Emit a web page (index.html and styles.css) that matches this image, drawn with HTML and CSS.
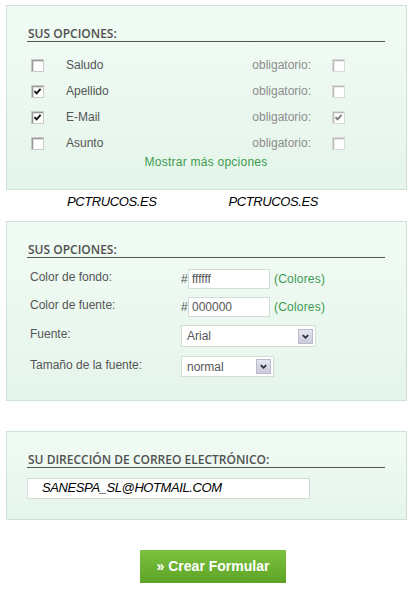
FILE: index.html
```html
<!DOCTYPE html>
<html lang="es">
<head>
<meta charset="utf-8">
<title>Formulario</title>
<link rel="stylesheet" href="styles.css">
</head>
<body>
<div class="page">
  <section class="panel panel-opts">
    <h2 class="heading">SUS OPCIONES:</h2>
    <ul class="opts">
      <li class="opt"><span class="cb"></span><span class="name">Saludo</span><span class="req">obligatorio:</span><span class="cb cb-dis"></span></li>
      <li class="opt"><span class="cb"><svg class="tick" viewBox="0 0 9 9"><path d="M1.5 4.2 L3.6 6.4 L7.6 1.8"/></svg></span><span class="name">Apellido</span><span class="req">obligatorio:</span><span class="cb cb-dis"></span></li>
      <li class="opt"><span class="cb"><svg class="tick" viewBox="0 0 9 9"><path d="M1.5 4.2 L3.6 6.4 L7.6 1.8"/></svg></span><span class="name">E-Mail</span><span class="req">obligatorio:</span><span class="cb cb-dis"><svg class="tick tick-dis" viewBox="0 0 9 9"><path d="M1.5 4.2 L3.6 6.4 L7.6 1.8"/></svg></span></li>
      <li class="opt"><span class="cb"></span><span class="name">Asunto</span><span class="req">obligatorio:</span><span class="cb cb-dis"></span></li>
    </ul>
    <div class="more">Mostrar más opciones</div>
  </section>

  <div class="brand"><span class="brand-a">PCTRUCOS.ES</span><span class="brand-b">PCTRUCOS.ES</span></div>

  <section class="panel panel-style">
    <h2 class="heading">SUS OPCIONES:</h2>
    <div class="form">
      <div class="frow r1">
        <span class="flabel">Color de fondo:</span>
        <span class="fctl"><span class="hash">#</span><span class="tin">ffffff</span><span class="link">(Colores)</span></span>
      </div>
      <div class="frow r2">
        <span class="flabel">Color de fuente:</span>
        <span class="fctl"><span class="hash">#</span><span class="tin">000000</span><span class="link">(Colores)</span></span>
      </div>
      <div class="frow r3">
        <span class="flabel">Fuente:</span>
        <span class="fctl"><span class="sel sel-wide"><span class="sel-val">Arial</span><span class="sel-btn"><svg viewBox="0 0 10 10"><path d="M2 3.5 L5 6.5 L8 3.5"/></svg></span></span></span>
      </div>
      <div class="frow r4">
        <span class="flabel">Tamaño de la fuente:</span>
        <span class="fctl"><span class="sel sel-narrow"><span class="sel-val">normal</span><span class="sel-btn"><svg viewBox="0 0 10 10"><path d="M2 3.5 L5 6.5 L8 3.5"/></svg></span></span></span>
      </div>
    </div>
  </section>

  <section class="panel panel-mail">
    <h2 class="heading">SU DIRECCIÓN DE CORREO ELECTRÓNICO:</h2>
    <div class="mail">SANESPA_SL@HOTMAIL.COM</div>
  </section>

  <div class="actions"><span class="btn">» Crear Formular</span></div>
</div>
</body>
</html>
```

FILE: styles.css
```css
html, body {
  margin: 0;
  padding: 0;
  background: #ffffff;
}

body {
  font-family: "Liberation Sans", Arial, sans-serif;
  font-size: 12px;
  color: #555555;
}

.page {
  padding-top: 5px;
  width: 412px;
}

.panel {
  margin: 0 5px 0 6px;
  border: 1px solid #cfe1d6;
  background: linear-gradient(#f1fbf5, #e5f5ea);
  padding: 21px 21px 19px 20px;
}

.heading {
  margin: 0;
  font-family: "Open Sans", "DejaVu Sans", sans-serif;
  font-size: 12px;
  font-weight: 600;
  line-height: 14px;
  color: #505050;
  border-bottom: 1px solid #555555;
  padding-left: 1px;
}

/* panel 1 */
.opts {
  list-style: none;
  margin: 13px 0 0 0;
  padding: 0;
  display: flex;
  flex-direction: column;
  gap: 6px;
}

.opt {
  display: flex;
  align-items: center;
  height: 20px;
  padding-left: 4px;
  padding-right: 40px;
}

.cb {
  position: relative;
  width: 11px;
  height: 11px;
  border: 1px solid #c9c9c9;
  background: #ffffff;
  box-shadow: inset 1px 1px 0 #9a9a9a, inset 2px 2px 0 #dcdcdc;
  flex: none;
}

.cb-dis {
  border-color: #dadada;
  box-shadow: inset 1px 1px 0 #b9b9b9, inset 2px 2px 0 #ececec;
}

.tick {
  position: absolute;
  left: 1px;
  top: 1px;
  width: 9px;
  height: 9px;
  fill: none;
  stroke: #111111;
  stroke-width: 1.9;
}

.tick-dis {
  stroke: #7a7a7a;
}

.name {
  flex: 1;
  margin-left: 22px;
  line-height: 16px;
  color: #555555;
}

.req {
  color: #8c8c8c;
  margin-right: 21px;
  line-height: 16px;
}

.more {
  margin-top: 1px;
  line-height: 16px;
  text-align: center;
  color: #3d9a4f;
  letter-spacing: 0.25px;
}

/* brand strip */
.brand {
  height: 27px;
  padding: 4px 0 0 67px;
  line-height: 16px;
  font-style: italic;
  font-size: 13px;
  letter-spacing: -0.4px;
  color: #000000;
}

.brand-b {
  margin-left: 72px;
}

/* panel 2 */
.panel-style {
  padding-bottom: 23px;
}

.form {
  margin-top: 11px;
  display: flex;
  flex-direction: column;
}

.frow {
  display: flex;
  align-items: center;
}

.r1 { height: 20px; }
.r2 { height: 20px; margin-top: 8px; }
.r3 { height: 22px; margin-top: 8px; }
.r4 { height: 21px; margin-top: 9px; }

.flabel {
  width: 151px;
  padding-left: 3px;
  line-height: 16px;
  margin-top: -4px;
  color: #555555;
}

.fctl {
  display: flex;
  align-items: center;
  height: 100%;
}

.hash {
  width: 7px;
  color: #555555;
}

.tin {
  box-sizing: border-box;
  width: 82px;
  height: 20px;
  border: 1px solid #d3ddd7;
  background: #ffffff;
  padding-left: 3px;
  line-height: 18px;
  color: #555555;
}

.link {
  margin-left: 4px;
  color: #3d9a4f;
  letter-spacing: 0.2px;
}

.sel {
  box-sizing: border-box;
  height: 100%;
  border: 1px solid #d3ddd7;
  background: #ffffff;
  display: flex;
  align-items: center;
  justify-content: space-between;
  padding: 0 2px 0 5px;
}

.sel-wide { width: 135px; }
.sel-narrow { width: 93px; }

.sel-val {
  color: #555555;
  line-height: 16px;
}

.sel-btn {
  box-sizing: border-box;
  width: 15px;
  height: 15px;
  border: 1px solid #b9b9cc;
  background: linear-gradient(#e6e6f0, #c9c9da);
  display: flex;
  align-items: center;
  justify-content: center;
}

.sel-btn svg {
  width: 9px;
  height: 9px;
  fill: none;
  stroke: #2b2b3a;
  stroke-width: 2;
}

/* panel 3 */
.panel-mail {
  margin-top: 30px;
  padding-bottom: 20px;
}

.mail {
  box-sizing: border-box;
  margin-top: 10px;
  width: 283px;
  height: 21px;
  border: 1px solid #d3ddd7;
  background: #ffffff;
  padding-left: 14px;
  line-height: 17px;
  font-size: 13px;
  font-style: italic;
  letter-spacing: -0.4px;
  color: #000000;
}

/* button */
.actions {
  padding: 30px 0 0 140px;
}

.btn {
  display: inline-block;
  box-sizing: border-box;
  width: 146px;
  height: 33px;
  line-height: 33px;
  text-align: center;
  font-size: 14px;
  font-weight: bold;
  color: #ffffff;
  background: linear-gradient(#7cc240, #5ea325);
}
```
